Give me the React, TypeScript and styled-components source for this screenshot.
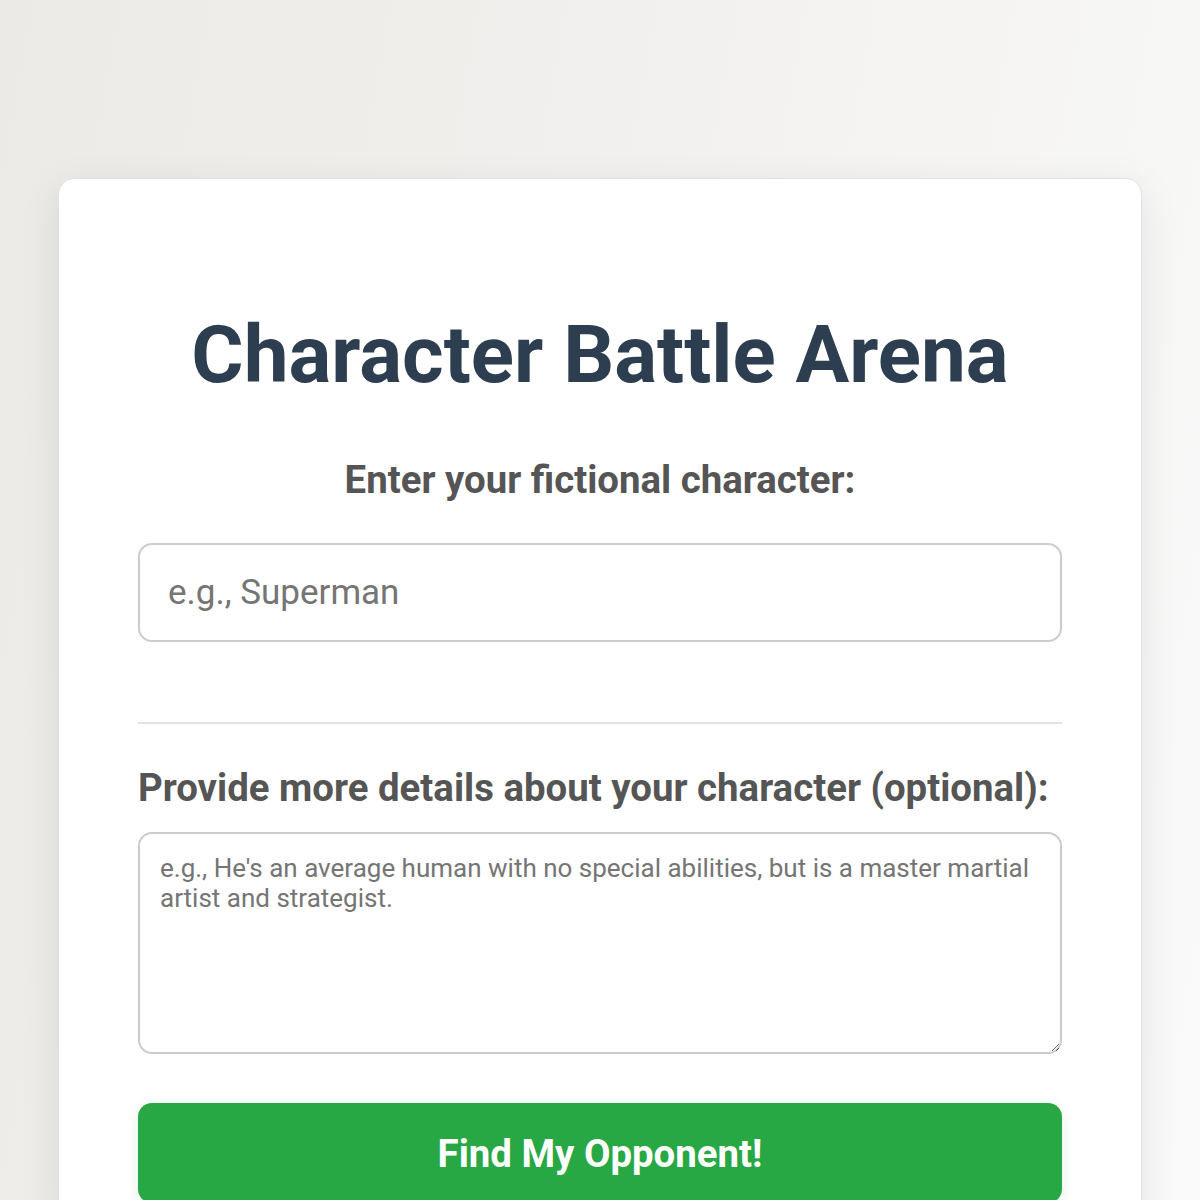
import React, { useState } from "react";
import styled, { createGlobalStyle } from "styled-components";

const GlobalStyle = createGlobalStyle`
  html, body {
    margin: 0;
    padding: 0;
  }
  body {
    font-family: Roboto, "Liberation Sans", sans-serif;
    background: linear-gradient(100deg, #ebeae7 0%, #f2f1ef 50%, #fafafa 100%);
    min-height: 1200px;
  }
`;

//#region Styles
const Page = styled.div`
  display: flex;
  justify-content: center;
  padding-top: 178px;
`;

const Card = styled.div`
  width: 1084px;
  box-sizing: border-box;
  background: #ffffff;
  border: 1px solid #e2e2e2;
  border-radius: 16px;
  box-shadow: 0 10px 40px rgba(0, 0, 0, 0.09);
  padding: 129px 79px 80px;
  display: flex;
  flex-direction: column;
`;

const Title = styled.h1`
  margin: 0;
  text-align: center;
  font-size: 80px;
  line-height: 94px;
  font-weight: 700;
  color: #2c3e50;
`;

const Label = styled.label<{ $center?: boolean }>`
  display: block;
  font-size: 38.4px;
  line-height: 46px;
  font-weight: 700;
  color: #555555;
  text-align: ${(p) => (p.$center ? "center" : "left")};
`;

const Subtitle = styled.div`
  margin-top: 55px;
`;

const NameInput = styled.input`
  margin-top: 40px;
  height: 99px;
  box-sizing: border-box;
  width: 100%;
  border: 2px solid #cccccc;
  border-radius: 14px;
  padding: 0 28px;
  font-family: Roboto, "Liberation Sans", sans-serif;
  font-size: 35px;
  color: #333;
  outline: none;
  &::placeholder {
    color: #757575;
  }
`;

const Divider = styled.hr`
  margin: 80px 0 41px;
  border: none;
  border-top: 2px solid #e3e3e3;
`;

const DetailsInput = styled.textarea`
  margin-top: 21px;
  height: 222px;
  box-sizing: border-box;
  width: 100%;
  border: 2px solid #cccccc;
  border-radius: 14px;
  padding: 19px 20px;
  font-family: Roboto, "Liberation Sans", sans-serif;
  font-size: 26px;
  line-height: 30px;
  color: #333;
  outline: none;
  resize: vertical;
  &::placeholder {
    color: #757575;
  }
`;

const SubmitButton = styled.button`
  margin-top: 49px;
  height: 100px;
  width: 100%;
  border: none;
  border-radius: 14px;
  background-color: #28a745;
  color: #ffffff;
  font-family: Roboto, "Liberation Sans", sans-serif;
  font-size: 38.4px;
  font-weight: 700;
  cursor: pointer;
  box-shadow: 0 4px 14px rgba(40, 167, 69, 0.15);
`;
//#endregion

const App = () => {
  const [character, setCharacter] = useState("");
  const [details, setDetails] = useState("");

  return (
    <>
      <GlobalStyle />
      <Page>
        <Card>
          <Title>Character Battle Arena</Title>
          <Subtitle>
            <Label $center htmlFor="character">
              Enter your fictional character:
            </Label>
          </Subtitle>
          <NameInput
            id="character"
            placeholder="e.g., Superman"
            value={character}
            onChange={(e) => setCharacter(e.target.value)}
          />
          <Divider />
          <Label htmlFor="details">
            Provide more details about your character (optional):
          </Label>
          <DetailsInput
            id="details"
            placeholder="e.g., He's an average human with no special abilities, but is a master martial artist and strategist."
            value={details}
            onChange={(e) => setDetails(e.target.value)}
          />
          <SubmitButton>Find My Opponent!</SubmitButton>
        </Card>
      </Page>
    </>
  );
};

export default App;
